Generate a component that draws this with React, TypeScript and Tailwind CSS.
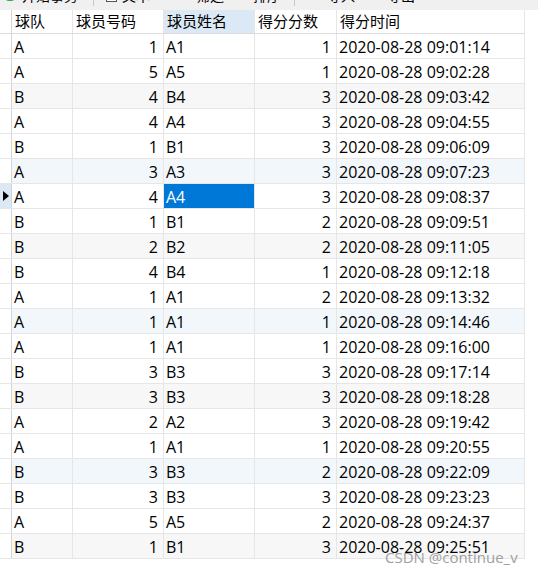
import React from 'react'

type Row = [string, number, string, number, string]

const rows: Row[] = [
  ['A', 1, 'A1', 1, '09:01:14'],
  ['A', 5, 'A5', 1, '09:02:28'],
  ['B', 4, 'B4', 3, '09:03:42'],
  ['A', 4, 'A4', 3, '09:04:55'],
  ['B', 1, 'B1', 3, '09:06:09'],
  ['A', 3, 'A3', 3, '09:07:23'],
  ['A', 4, 'A4', 3, '09:08:37'],
  ['B', 1, 'B1', 2, '09:09:51'],
  ['B', 2, 'B2', 2, '09:11:05'],
  ['B', 4, 'B4', 1, '09:12:18'],
  ['A', 1, 'A1', 2, '09:13:32'],
  ['A', 1, 'A1', 1, '09:14:46'],
  ['A', 1, 'A1', 1, '09:16:00'],
  ['B', 3, 'B3', 3, '09:17:14'],
  ['B', 3, 'B3', 3, '09:18:28'],
  ['A', 2, 'A2', 3, '09:19:42'],
  ['A', 1, 'A1', 1, '09:20:55'],
  ['B', 3, 'B3', 2, '09:22:09'],
  ['B', 3, 'B3', 3, '09:23:23'],
  ['A', 5, 'A5', 2, '09:24:37'],
  ['B', 1, 'B1', 3, '09:25:51'],
]

const SELECTED = 6

// grid widths: indicator | 球队 | 球员号码 | 球员姓名 | 得分分数 | 得分时间
const cols = 'grid grid-cols-[12px_61px_91px_91px_82px_188px]'

/** top toolbar, cut off by the screenshot so only the bottom sliver shows */
const Toolbar: React.FC = () => (
  <div className="h-[10px] overflow-hidden bg-[#f0f0f0] text-[14px] text-black">
    <div className="flex items-center h-[24px] -mt-[16px]">
      <span className="ml-[5px] w-[10px] h-[10px] bg-[#3aa655] rounded-sm" />
      <span className="ml-[7px]">开始事务</span>
      <span className="ml-[15px] w-px h-[20px] bg-[#c8c8c8]" />
      <span className="ml-[12px] w-[11px] h-[11px] border border-[#555] bg-white" />
      <span className="ml-[5px]">文本</span>
      <span className="ml-[30px] w-[6px] h-[8px] bg-[#2f7fd0]" />
      <span className="ml-[10px]">筛选</span>
      <span className="ml-[12px] w-[8px] h-[8px] bg-[#2f7fd0] rounded-full" />
      <span className="ml-[9px]">排序</span>
      <span className="ml-[13px] w-px h-[20px] bg-[#c8c8c8]" />
      <span className="ml-[8px] w-[8px] h-[6px] bg-[#2f7fd0]" />
      <span className="ml-[1px] w-[5px] h-[8px] bg-[#3aa655]" />
      <span className="ml-[10px]">导入</span>
      <span className="ml-[9px] w-[8px] h-[6px] bg-[#2f7fd0]" />
      <span className="ml-[1px] w-[6px] h-[8px] bg-[#f0901c]" />
      <span className="ml-[8px]">导出</span>
    </div>
  </div>
)

const HeaderRow: React.FC = () => {
  const names = ['球队', '球员号码', '球员姓名', '得分分数', '得分时间']
  return (
    <div className={`${cols} h-[24px] border-b border-[#dcdcdc] text-[15px]`}>
      <div className="border-r border-[#d4d4d4] bg-white" />
      {names.map((n, i) => (
        <div
          key={n}
          className={`border-r border-[#e6e6e6] pl-[3px] flex items-center ${
            i === 2 ? 'bg-[#dbe9f6]' : 'bg-white'
          }`}
        >
          {n}
        </div>
      ))}
    </div>
  )
}

const DataRow: React.FC<{ row: Row; idx: number }> = ({ row, idx }) => {
  const [team, num, name, score, time] = row
  const selected = idx === SELECTED
  let bg = 'bg-white'
  if (idx % 6 === 2) bg = 'bg-[#f7f7f7]'
  if (idx % 6 === 5) bg = 'bg-[#f2f7fc]'
  const cell = 'border-r border-[#e6e6e6] flex items-center pt-px'
  return (
    <div className={`${cols} h-[25px] border-b border-[#e6e6e6] text-[16px] ${bg}`}>
      <div
        className={`border-r border-[#d4d4d4] flex items-center ${
          selected ? 'bg-[#dbe9f6]' : 'bg-white'
        }`}
      >
        {selected && (
          <svg width="6" height="10" viewBox="0 0 6 10" className="ml-[3px]">
            <path d="M0 0 L6 5 L0 10 Z" fill="#000" />
          </svg>
        )}
      </div>
      <div className={`${cell} pl-[2px]`}>{team}</div>
      <div className={`${cell} justify-end pr-[5px]`}>{num}</div>
      <div
        className={`${cell} pl-[2px] ${selected ? 'bg-[#0078d7] text-white' : ''}`}
      >
        {name}
      </div>
      <div className={`${cell} justify-end pr-[5px]`}>{score}</div>
      <div className={`${cell} pl-[2px]`}>2020-08-28 {time}</div>
    </div>
  )
}

export default function App() {
  return (
    <div className="relative w-[538px] h-[576px] bg-white overflow-hidden text-black leading-none font-['Open_Sans','Noto_Sans_CJK_SC',sans-serif]">
      <Toolbar />
      <div className="w-[525px]">
        <HeaderRow />
        {rows.map((r, i) => (
          <DataRow key={i} row={r} idx={i} />
        ))}
      </div>
      <div className="absolute left-[385px] top-[550px] text-[15px] text-[#a0a0a0]">
        CSDN @continue_v
      </div>
    </div>
  )
}
